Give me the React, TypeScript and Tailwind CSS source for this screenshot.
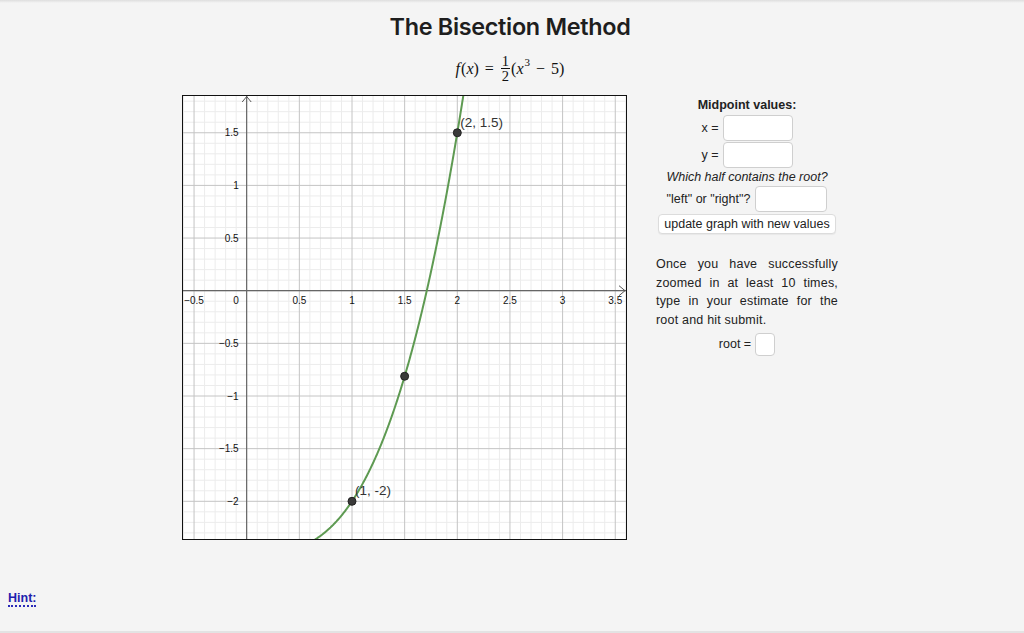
import React from "react";

const W = 445;
const H = 445;
const OX = 64.7;
const OY = 195.7;
const S = 105.3;
const X = (x: number) => OX + x * S;
const Y = (y: number) => OY - y * S;

function fmt(v: number) {
  const s = String(Math.abs(v));
  return v < 0 ? "\u2212" + s : s;
}

function Graph() {
  const minorX: number[] = [];
  const majorX: number[] = [];
  for (let k = -6; k <= 36; k++) {
    if (k % 5 === 0) majorX.push(k / 10);
    else minorX.push(k / 10);
  }
  const minorY: number[] = [];
  const majorY: number[] = [];
  for (let k = -23; k <= 18; k++) {
    if (k % 5 === 0) majorY.push(k / 10);
    else minorY.push(k / 10);
  }
  const pts: string[] = [];
  for (let i = 0; i <= 400; i++) {
    const x = 0.6 + (i / 400) * 1.6;
    const y = 0.5 * (x * x * x - 5);
    pts.push(`${i === 0 ? "M" : "L"}${X(x).toFixed(2)},${Y(y).toFixed(2)}`);
  }
  const xLabels = [-0.5, 0.5, 1, 1.5, 2, 2.5, 3, 3.5];
  const yLabels = [1.5, 1, 0.5, -0.5, -1, -1.5, -2];
  return (
    <svg width={W} height={H} viewBox={`0 0 ${W} ${H}`} className="block shrink-0">
      <defs>
        <clipPath id="box">
          <rect x="1" y="1" width={W - 2} height={H - 2} />
        </clipPath>
      </defs>
      <rect x="0" y="0" width={W} height={H} fill="#ffffff" />
      <g clipPath="url(#box)">
        {minorX.map((x) => (
          <line key={"mx" + x} x1={X(x)} x2={X(x)} y1={0} y2={H} stroke="#ececec" strokeWidth="1" />
        ))}
        {minorY.map((y) => (
          <line key={"my" + y} y1={Y(y)} y2={Y(y)} x1={0} x2={W} stroke="#ececec" strokeWidth="1" />
        ))}
        {majorX.map((x) => (
          <line key={"Mx" + x} x1={X(x)} x2={X(x)} y1={0} y2={H} stroke="#c4c4c4" strokeWidth="1" />
        ))}
        {majorY.map((y) => (
          <line key={"My" + y} y1={Y(y)} y2={Y(y)} x1={0} x2={W} stroke="#c4c4c4" strokeWidth="1" />
        ))}
        <line x1={OX} x2={OX} y1={0} y2={H} stroke="#555" strokeWidth="1" />
        <line x1={0} x2={W} y1={OY} y2={OY} stroke="#666" strokeWidth="1.2" />
        <polyline points={`${OX - 4.5},${7} ${OX},${1.5} ${OX + 4.5},${7}`} fill="none" stroke="#555" strokeWidth="1" />
        <polyline points={`${W - 8},${OY - 5} ${W - 2},${OY} ${W - 8},${OY + 5}`} fill="none" stroke="#555" strokeWidth="1" />
        <path d={pts.join(" ")} fill="none" stroke="#5e9a52" strokeWidth="2" />
        <g fontFamily="'Liberation Sans', Arial, sans-serif" fontSize="10" fill="#111">
          {xLabels.map((x) => (
            <text key={"xl" + x} x={X(x)} y={OY + 13.5} textAnchor="middle">
              {fmt(x)}
            </text>
          ))}
          <text x={OX - 8} y={OY + 13.5} textAnchor="end">0</text>
          {yLabels.map((y) => (
            <text key={"yl" + y} x={OX - 8} y={Y(y) + 3.5} textAnchor="end">
              {fmt(y)}
            </text>
          ))}
        </g>
        <g fill="#3a3a3a" stroke="#222" strokeWidth="1">
          <circle cx={X(2)} cy={Y(1.5)} r="4" />
          <circle cx={X(1.5)} cy={Y(-0.8125)} r="4" />
          <circle cx={X(1)} cy={Y(-2)} r="4" />
        </g>
        <g fontFamily="'Liberation Sans', Arial, sans-serif" fontSize="13.5" fill="#333">
          <text x={X(2) + 3} y={Y(1.5) - 5.5}>(2, 1.5)</text>
          <text x={X(1) + 3} y={Y(-2) - 6}>(1, -2)</text>
        </g>
      </g>
      <rect x="0.5" y="0.5" width={W - 1} height={H - 1} fill="none" stroke="#111" strokeWidth="1" />
    </svg>
  );
}

function Box({ w, h }: { w: string; h: string }) {
  return <div className={`${w} ${h} rounded-[4px] border border-[#cfcfcf] bg-white`} />;
}

export default function App() {
  return (
    <div
      className="relative h-[633px] w-[1024px] overflow-hidden bg-[#f4f4f4] text-[#222] border-b-2 border-[#e3e3e3]"
      style={{ fontFamily: "'Liberation Sans', Arial, sans-serif" }}
    >
      <div className="absolute inset-x-0 top-0 h-[3px] bg-gradient-to-b from-[#dedede] to-[#f4f4f4]" />
      <div className="flex flex-col items-center pt-[11px]">
        <h1
          className="text-[23.4px] leading-[32px] font-semibold tracking-[-0.3px] text-[#1e1e1e] pr-[4px]"
          style={{ fontFamily: "Inter, 'Liberation Sans', sans-serif" }}
        >
          The Bisection Method
        </h1>
        <div
          className="mt-[11px] flex items-center text-[16px] text-[#111] pr-[4px]"
          style={{ fontFamily: "'Liberation Serif', 'DejaVu Serif', serif" }}
        >
          <span className="italic">f</span>
          <span className="ml-[1px]">(</span>
          <span className="italic">x</span>
          <span>)</span>
          <span className="mx-[6px]">=</span>
          <span className="inline-flex flex-col items-center leading-[14px] text-[14.5px] mx-[1px]">
            <span className="px-[1px]">1</span>
            <span className="h-px w-[9px] bg-[#111]" />
            <span className="px-[1px]">2</span>
          </span>
          <span>(</span>
          <span className="italic">x</span>
          <span className="text-[11px] relative -top-[6px] ml-[1px]">3</span>
          <span className="mx-[6px]">−</span>
          <span>5</span>
          <span>)</span>
        </div>
      </div>

      <div className="mt-[12px] flex items-start pl-[182px]">
        <Graph />
        <div className="ml-[23px] mt-[2px] flex w-[194px] flex-col items-center px-[6px] text-[12.5px] leading-[16px] text-[#222]">
          <div className="font-bold">Midpoint values:</div>
          <div className="mt-[2px] flex items-center gap-[4px]">
            <span>x =</span>
            <Box w="w-[70px]" h="h-[26px]" />
          </div>
          <div className="mt-[1px] flex items-center gap-[4px]">
            <span>y =</span>
            <Box w="w-[70px]" h="h-[26px]" />
          </div>
          <div className="mt-[1px] italic">Which half contains the root?</div>
          <div className="mt-[1px] flex items-center gap-[5px]">
            <span>"left" or "right"?</span>
            <Box w="w-[72px]" h="h-[26px]" />
          </div>
          <button className="mt-[2px] h-[20px] rounded-[4px] border border-[#dcdcdc] bg-white px-[5px] text-[12.5px] leading-[16px] text-[#222] shadow-[0_1px_1px_rgba(0,0,0,0.05)]">
            update graph with new values
          </button>
          <p className="mt-[21px] w-full text-justify leading-[18.7px] tracking-[0.2px]">
            Once you have successfully zoomed in at least 10 times, type in your estimate for the root and hit submit.
          </p>
          <div className="mt-[3px] flex items-center gap-[4px]">
            <span>root =</span>
            <Box w="w-[20px]" h="h-[23px]" />
          </div>
        </div>
      </div>

      <div className="mt-[45px] pl-[8px]">
        <span className="border-b-2 border-dotted border-[#2a2ab8] text-[12.5px] font-semibold leading-[14px] text-[#1f1fae]">
          Hint:
        </span>
      </div>
    </div>
  );
}
